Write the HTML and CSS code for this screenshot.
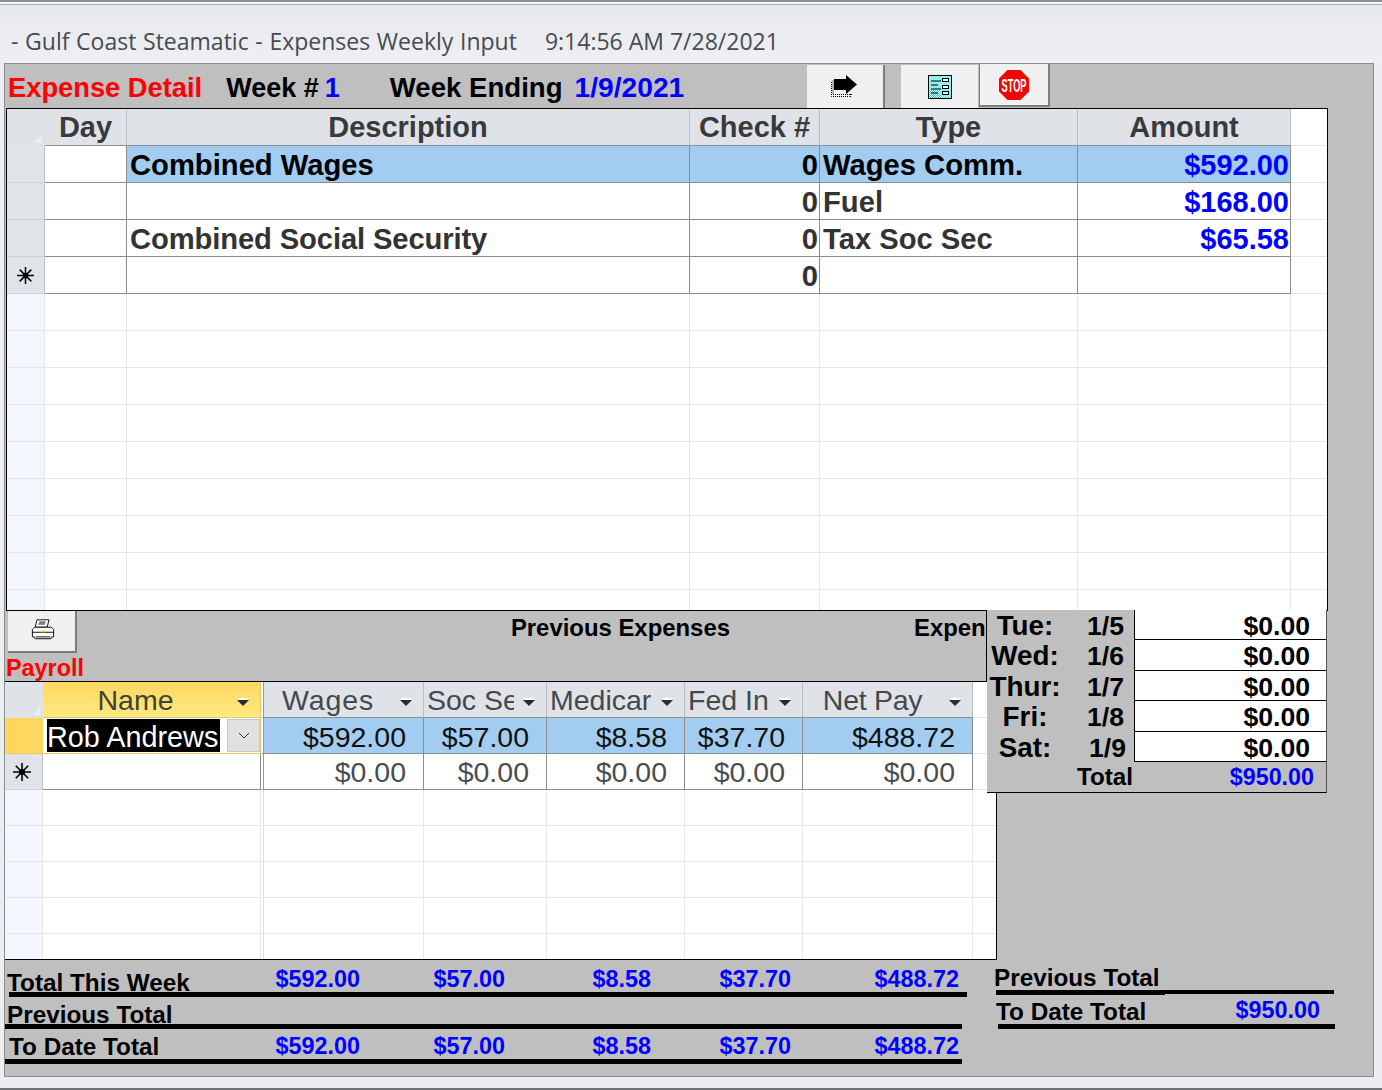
FILE: index.html
```html
<!DOCTYPE html>
<html lang="en">
<head>
<meta charset="utf-8">
<title>Expenses Weekly Input</title>
<link rel="stylesheet" href="styles.css">
</head>
<body>
<svg class="defs" width="0" height="0"><defs>
  <pattern id="dither" width="2" height="2" patternUnits="userSpaceOnUse"><rect width="2" height="2" fill="#fff"/><rect width="1" height="1" fill="#2fc4c4"/><rect x="1" y="1" width="1" height="1" fill="#2fc4c4"/></pattern>
  <symbol id="newrow" viewBox="0 0 18 18"><path d="M9 0v18M0 9h18M2.800 2.800l12.400 12.400M15.200 2.800 2.800 15.200" stroke="#000" stroke-width="1.600" fill="none"/><circle cx="9" cy="9" r="3" fill="#000"/></symbol>
</defs></svg>
<div class="app-top"></div>
<header class="titlebar"><span class="t-name">- Gulf Coast Steamatic - Expenses Weekly Input</span><span class="t-time">9:14:56 AM 7/28/2021</span></header>
<main class="form">
  <div class="form-head">
    <span class="h-expense">Expense Detail</span>
    <span class="h-week">Week #</span>
    <span class="h-weeknum">1</span>
    <span class="h-ending">Week Ending</span>
    <span class="h-date">1/9/2021</span>
    <button class="btn btn-next" type="button">
      <svg width="28" height="23" viewBox="0 0 28 23"><path d="M.5 7v14.500h18M19.500 19v3" fill="none" stroke="#000" stroke-dasharray="1 1"/><path d="M2 5.500v14h19" fill="none" stroke="#000" stroke-dasharray="1 1"/><path d="M3 4h12V0l11 9.500L15 19v-4H3z" fill="#000"/></svg>
    </button>
    <button class="btn btn-form" type="button">
      <svg width="24" height="24" viewBox="0 0 24 24"><rect x=".5" y=".5" width="23" height="23" fill="#8ff0ee" stroke="#000"/><path d="M1 23V14l9 2 4 7z" fill="url(#dither)"/><path d="M3 6h10M3 10h7M3 14h10M3 18h7" stroke="#000"/><g fill="#fff" stroke="#000"><rect x="14.500" y="3.500" width="6" height="3"/><rect x="14.500" y="10.500" width="6" height="3"/><rect x="14.500" y="16.500" width="6" height="3"/></g></svg>
    </button>
    <button class="btn btn-stop" type="button">
      <svg width="32" height="32" viewBox="0 0 32 32"><path d="M9.500 1h13L31 9.500v13L22.500 31h-13L1 22.500v-13z" fill="#f00600"/><text x="16" y="22.500" class="stop-text" textLength="25" lengthAdjust="spacingAndGlyphs">STOP</text></svg>
    </button>
  </div>

  <section class="sheet-a">
    <div class="ra ra-head">
      <div class="sel corner"></div><div class="hd">Day</div><div class="hd">Description</div><div class="hd">Check #</div><div class="hd">Type</div><div class="hd">Amount</div><div class="rest"></div>
    </div>
    <div class="ra ra-data">
      <div class="sel"></div><div class="c"></div><div class="c picked dark">Combined Wages</div><div class="c picked num dark">0</div><div class="c picked dark">Wages Comm.</div><div class="c picked num blue">$592.00</div><div class="rest"></div>
    </div>
    <div class="ra ra-data">
      <div class="sel"></div><div class="c"></div><div class="c"></div><div class="c num">0</div><div class="c">Fuel</div><div class="c num blue">$168.00</div><div class="rest"></div>
    </div>
    <div class="ra ra-data">
      <div class="sel"></div><div class="c"></div><div class="c c-tight">Combined Social Security</div><div class="c num">0</div><div class="c">Tax Soc Sec</div><div class="c num blue">$65.58</div><div class="rest"></div>
    </div>
    <div class="ra ra-data">
      <div class="sel"><svg class="star" width="17" height="17"><use href="#newrow"/></svg></div><div class="c"></div><div class="c"></div><div class="c num">0</div><div class="c"></div><div class="c"></div><div class="rest"></div>
    </div>
    <div class="ra ra-empty"><i></i><i></i><i></i><i></i><i></i><i></i><i></i></div>
    <div class="ra ra-empty"><i></i><i></i><i></i><i></i><i></i><i></i><i></i></div>
    <div class="ra ra-empty"><i></i><i></i><i></i><i></i><i></i><i></i><i></i></div>
    <div class="ra ra-empty"><i></i><i></i><i></i><i></i><i></i><i></i><i></i></div>
    <div class="ra ra-empty"><i></i><i></i><i></i><i></i><i></i><i></i><i></i></div>
    <div class="ra ra-empty"><i></i><i></i><i></i><i></i><i></i><i></i><i></i></div>
    <div class="ra ra-empty"><i></i><i></i><i></i><i></i><i></i><i></i><i></i></div>
    <div class="ra ra-empty"><i></i><i></i><i></i><i></i><i></i><i></i><i></i></div>
    <div class="ra ra-empty ra-last"><i></i><i></i><i></i><i></i><i></i><i></i><i></i></div>
  </section>

  <section class="band">
    <div class="band-top">
      <button class="btn btn-print" type="button">
        <svg width="24" height="23" viewBox="0 0 26 24"><path d="M6.500 1.500h13l-2 8h-13z" fill="#fff" stroke="#000"/><path d="M9 4h7M8 6h7" stroke="#000"/><path d="M1.500 12 4 9.500h18l2.500 2.500v8h-2l-1 2h-17l-1-2h-2z" fill="#fff" stroke="#000"/><path d="M1.500 15h23M5 20h16" stroke="#000"/><path d="M11 14h4" stroke="#e3e300" stroke-width="2"/></svg>
      </button>
      <span class="band-title">Previous Expenses</span>
      <span class="band-clip">Expen</span>
    </div>
    <div class="band-payroll">Payroll</div>
  </section>

  <section class="sheet-b">
    <div class="rb rb-head">
      <div class="sel corner"></div>
      <div class="hb hb-name"><span class="hb-t">Name</span><b class="arrow"></b></div>
      <div class="hb hb-wages"><span class="hb-t">Wages</span><b class="arrow"></b></div>
      <div class="hb hb-clip"><span class="hb-t clip">Soc Se</span><b class="arrow"></b></div>
      <div class="hb hb-clip"><span class="hb-t clip">Medicar</span><b class="arrow"></b></div>
      <div class="hb hb-clip"><span class="hb-t clip">Fed In</span><b class="arrow"></b></div>
      <div class="hb hb-net"><span class="hb-t">Net Pay</span><b class="arrow"></b></div>
      <div class="rest"></div>
    </div>
    <div class="rb rb-data">
      <div class="sel sel-active"></div>
      <div class="d d-name"><span class="selected-text">Rob Andrews</span><span class="combo"><svg width="12" height="7" viewBox="0 0 12 7"><path d="M1 1l5 5 5-5" fill="none" stroke="#333"/></svg></span></div>
      <div class="d d-picked d-wages">$592.00</div><div class="d d-picked">$57.00</div><div class="d d-picked">$8.58</div><div class="d d-picked">$37.70</div><div class="d d-picked">$488.72</div><div class="rest"></div>
    </div>
    <div class="rb rb-data">
      <div class="sel"><svg class="star star-b" width="18" height="18"><use href="#newrow"/></svg></div>
      <div class="d"></div>
      <div class="d dim d-wages">$0.00</div><div class="d dim">$0.00</div><div class="d dim">$0.00</div><div class="d dim">$0.00</div><div class="d dim">$0.00</div><div class="rest"></div>
    </div>
    <div class="rb rb-empty"><i></i><i></i><i></i><i></i><i></i><i></i><i></i><i></i></div>
    <div class="rb rb-empty"><i></i><i></i><i></i><i></i><i></i><i></i><i></i><i></i></div>
    <div class="rb rb-empty"><i></i><i></i><i></i><i></i><i></i><i></i><i></i><i></i></div>
    <div class="rb rb-empty"><i></i><i></i><i></i><i></i><i></i><i></i><i></i><i></i></div>
    <div class="rb rb-empty rb-last"><i></i><i></i><i></i><i></i><i></i><i></i><i></i><i></i></div>
  </section>

  <aside class="days">
    <div class="day"><span class="day-l">Tue:</span><span class="day-d">1/5</span><span class="day-v">$0.00</span></div>
    <div class="day day-tall"><span class="day-l">Wed:</span><span class="day-d">1/6</span><span class="day-v">$0.00</span></div>
    <div class="day"><span class="day-l">Thur:</span><span class="day-d">1/7</span><span class="day-v">$0.00</span></div>
    <div class="day day-tall"><span class="day-l">Fri:</span><span class="day-d">1/8</span><span class="day-v">$0.00</span></div>
    <div class="day"><span class="day-l">Sat:</span><span class="day-d day-sat">1/9</span><span class="day-v">$0.00</span></div>
    <div class="day-total"><span class="dt-l">Total</span><span class="dt-v">$950.00</span></div>
  </aside>

  <section class="totals">
    <div class="tot-left">
      <div class="tr tr-1"><span class="tl">Total This Week</span><span class="tv">$592.00</span><span class="tv">$57.00</span><span class="tv">$8.58</span><span class="tv">$37.70</span><span class="tv">$488.72</span></div>
      <div class="rule rule-1"></div>
      <div class="tr tr-2"><span class="tl">Previous Total</span></div>
      <div class="rule rule-2"></div>
      <div class="tr tr-3"><span class="tl tl-3">To Date Total</span><span class="tv">$592.00</span><span class="tv">$57.00</span><span class="tv">$8.58</span><span class="tv">$37.70</span><span class="tv">$488.72</span></div>
      <div class="rule rule-2"></div>
    </div>
    <div class="tot-right">
      <div class="tr-r1"><span class="tl">Previous Total</span></div>
      <div class="rule-r1"><span></span></div>
      <div class="tr-r2"><span class="tl">To Date Total</span><span class="tv">$950.00</span></div>
      <div class="rule rule-r2"></div>
    </div>
  </section>
</main>
<div class="app-bottom"></div>
</body>
</html>
```
FILE: styles.css
```css
* { box-sizing: border-box; }
html, body { margin: 0; padding: 0; }
body {
  width: 1382px;
  height: 1090px;
  overflow: hidden;
  background: #eceef2;
  font-family: "Liberation Sans", Arial, sans-serif;
  color: #000;
}
.defs { display: block; height: 0; }
.app-top {
  height: 5px;
  border-top: 2px solid #8b8f94;
  border-bottom: 1px solid #a6a9ad;
  background: #f6f7f8;
}
.titlebar {
  height: 58px;
  padding: 22px 0 0 11px;
  display: flex;
  font: 23px/28px "Open Sans", "Noto Sans", sans-serif;
  color: #474b50;
  background: linear-gradient(#e6e8ec, #eef0f3);
  white-space: nowrap;
}
.t-name { word-spacing: 0.7px; }
.t-time { margin-left: 28px; }

.form {
  position: relative;
  width: 1370px;
  height: 1014px;
  margin-left: 4px;
  background: #bfbfbf;
  border: 1px solid #8a8c8f;
}
.form-head {
  height: 44px;
  padding-right: 323px;
  display: flex;
  align-items: flex-start;
  white-space: nowrap;
  font-weight: 700;
  font-size: 27px;
  line-height: 48px;
}
.h-expense { margin-left: 3px; color: #f00; font-size: 27.300px; }
.h-week { margin-left: 24px; }
.h-weeknum { margin-left: 6px; color: #00f; }
.h-ending { margin-left: 50px; font-size: 27.600px; }
.h-date { margin-left: 12px; color: #00f; font-size: 28.200px; line-height: 46px; }

.btn {
  padding: 0;
  display: flex;
  align-items: center;
  justify-content: center;
  background: #f0f0f0;
  border: 0;
  border-right: 2px solid #7d7d7d;
  border-bottom: 2px solid #7d7d7d;
}
.btn-next { width: 78px; height: 43px; margin: 1px 0 0 auto; border-bottom: 0; }
.btn-form { width: 77px; height: 43px; margin: 1px 0 0 16px; border-right: 0; border-bottom: 0; }
.btn-stop { width: 71px; height: 43px; margin-left: 1px; border-left: 1px solid #7d7d7d; }
.stop-text { font: 700 18px "Liberation Sans", sans-serif; fill: #fff; text-anchor: middle; }
.btn-print { width: 69px; height: 42px; margin-left: 3px; }
.btn-print svg { margin: -4px 0 0 3px; }

.sheet-a {
  width: 1322px;
  height: 503px;
  margin-left: 1px;
  border: 1px solid #000;
  background: #fff;
  overflow: hidden;
}
.ra {
  display: grid;
  grid-template-columns: 38px 82px 563px 130px 258px 213px 1fr;
  grid-template-rows: 100%;
  height: 37px;
}
.ra-last { height: 21px; }
.sel {
  background: #e0e4e9;
  border-bottom: 1px solid #cfd3d8;
  border-right: 1px solid #bfc3c8;
  display: flex;
  align-items: center;
  justify-content: center;
}
.corner { position: relative; background: #dfe3e8; border-right: 0; border-bottom: 0; }
.corner::after {
  content: "";
  position: absolute;
  right: 3px;
  bottom: 3px;
  border-left: 8px solid transparent;
  border-bottom: 8px solid #eef0f3;
}
.star { display: block; }
.star-b { margin-right: 3px; }
.hd {
  background: #dfe3e8;
  border-right: 1px solid #b9bcc1;
  border-bottom: 1px solid #8c8f93;
  font: 700 29px/36px "Liberation Sans", sans-serif;
  color: #3a3a3d;
  text-align: center;
}
.ra-head .rest { background: #fff; border-bottom: 1px solid #e6e6e6; }
.rest { border-bottom: 1px solid #e4e4e4; }
.c {
  background: #fff;
  border-right: 1px solid #8c8c8c;
  border-bottom: 1px solid #8c8c8c;
  padding: 0 1px 0 3px;
  font: 700 29.200px/38px "Liberation Sans", sans-serif;
  color: #333;
  white-space: nowrap;
  overflow: hidden;
}
.c-tight { letter-spacing: -0.12px; }
.picked { background: #a3cdf0; }
.dark { color: #000; }
.num { text-align: right; }
.blue { color: #00f; font-size: 29px; }
.ra-empty i { display: block; border-right: 1px solid #e6e6e6; border-bottom: 1px solid #e6e6e6; }
.ra-empty i:first-child { background: #f4f6fd; }
.ra-empty i:last-child { border-right: 0; }
.ra-last i { border-bottom: 0; }

.band {
  width: 982px;
  height: 71px;
  border-right: 1px solid #000;
  border-bottom: 1px solid #000;
  overflow: hidden;
}
.band-top { height: 42px; display: flex; font: 700 23.900px/34px "Liberation Sans", sans-serif; white-space: nowrap; }
.band-title { margin-left: 434px; }
.band-clip { width: 72px; margin-left: 184px; flex: none; }
.band-payroll { margin: 0 0 0 1px; color: #f00; font: 700 23.400px/30px "Liberation Sans", sans-serif; }

.sheet-b {
  width: 992px;
  height: 278px;
  background: #fff;
  border-right: 1px solid #000;
  border-bottom: 1px solid #000;
  overflow: hidden;
}
.rb {
  display: grid;
  grid-template-columns: 38px 218px 163px 123px 138px 118px 170px 1fr;
  grid-template-rows: 100%;
  height: 36px;
}
.rb-last { height: 25px; }
.hb {
  position: relative;
  background: #dfe3e8;
  border-right: 1px solid #b9bcc1;
  border-bottom: 1px solid #8c8f93;
  font: 28.500px/36px "Liberation Sans", sans-serif;
  color: #45484c;
  text-align: center;
  padding-right: 30px;
  white-space: nowrap;
}
.hb-name {
  background: linear-gradient(#ffd75f, #ffe980);
  border-right: 1px solid #e8c968;
  border-bottom: 1px solid #e8c968;
  color: #3f4238;
  padding-right: 32px;
}
.hb-clip { padding-right: 32px; }
.hb-t.clip {
  display: block;
  overflow: hidden;
  text-align: left;
  padding-left: 3px;
}
.hb-wages { border-left: 2px solid #fff; box-shadow: inset 1px 0 0 #9a9a9a; letter-spacing: 0.9px; }
.hb-net { letter-spacing: -0.3px; }
.arrow {
  position: absolute;
  right: 11px;
  top: 18px;
  width: 0;
  height: 0;
  border-left: 6px solid transparent;
  border-right: 6px solid transparent;
  border-top: 6px solid #2b2b2b;
  filter: drop-shadow(0 -2px 0 #fff);
}
.sel-active { background: #ffd75f; border-color: #e8c968; border-right: 0; }
.d {
  background: #fff;
  border-right: 1px solid #8c8c8c;
  border-bottom: 1px solid #8c8c8c;
  padding-right: 17px;
  font: 28.500px/36px "Liberation Sans", sans-serif;
  color: #111;
  text-align: right;
  white-space: nowrap;
  overflow: hidden;
}
.d-picked { background: #a3cdf0; line-height: 38px; }
.dim { color: #4a4d50; }
.d-wages { border-left: 2px solid #fff; box-shadow: inset 1px 0 0 #9a9a9a; }
.d-name {
  display: flex;
  justify-content: flex-start;
  align-items: flex-start;
  padding: 1px 0 0 4px;
  border-right: 1px solid #e8c968;
  border-bottom: 1px solid #e8c968;
  line-height: 37px;
}
.selected-text { background: #000; color: #fff; height: 33px; width: 173px; font-size: 28.800px; text-align: left; flex: none; overflow: hidden; }
.combo {
  width: 33px;
  height: 33px;
  margin-left: 7px;
  background: #e0e0e0;
  border: 1px solid #c9c9c9;
  display: flex;
  align-items: center;
  justify-content: center;
  flex: none;
}
.rb-empty i { display: block; border-right: 1px solid #e6e6e6; border-bottom: 1px solid #e6e6e6; }
.rb-empty i:first-child { background: #f4f6fd; }
.rb-empty i:nth-child(3) { border-left: 2px solid #fff; box-shadow: inset 1px 0 0 #dcdcdc; }
.rb-empty i:last-child { border-right: 0; }
.rb-last i { border-bottom: 0; }

.days {
  position: absolute;
  left: 982px;
  top: 546px;
  width: 340px;
  background: #bfbfbf;
  border-right: 1px solid #555;
  border-bottom: 1px solid #000;
  font: 700 26.600px/1 "Liberation Sans", sans-serif;
}
.day { display: grid; grid-template-columns: 76px 71px 1fr; grid-template-rows: 100%; height: 30px; line-height: 32px; }
.day-tall { height: 31px; }
.day-l { text-align: center; font-size: 27.800px; white-space: nowrap; }
.day-d { padding-left: 24px; }
.day-sat { padding-left: 26px; }
.day-v { background: #fff; border-left: 1px solid #000; border-bottom: 1px solid #000; text-align: right; padding-right: 16px; overflow: hidden; }
.day-total { height: 30px; display: grid; grid-template-columns: 147px 1fr; line-height: 30px; }
.dt-l { text-align: right; padding-right: 1px; font-size: 24.200px; }
.dt-v { color: #00f; text-align: right; padding-right: 12px; font-size: 23.300px; }

.totals { display: flex; font: 700 24.300px/26px "Liberation Sans", sans-serif; white-space: nowrap; }
.tot-left { width: 990px; flex: none; }
.tr { display: grid; grid-template-columns: 355px 145px 146px 140px 168px; }
.tl { grid-column: 1; grid-row: 1; padding-left: 2px; }
.tv { color: #00f; font-size: 23.400px; text-align: right; }
.tr-1 { height: 32px; }
.tr-1 .tl { padding-top: 10px; }
.tr-1 .tv { padding-top: 6px; }
.tv:nth-child(2) { grid-column: 1; grid-row: 1; }
.tr-2 { height: 27px; padding-top: 5px; }
.tr-3 { height: 30px; }
.tr-3 .tl-3 { padding: 5px 0 0 4px; }
.tr-3 .tv { padding-top: 4px; }
.rule { height: 5px; background: #000; }
.rule-1 { width: 958px; margin-left: 4px; }
.rule-2 { width: 957px; }
.tot-right { width: 345px; flex: none; margin-left: -1px; }
.tr-r1 { height: 30px; padding-top: 5px; }
.tr-r1 .tl { padding-left: 0; }
.rule-r1 { width: 338px; height: 5px; margin-left: 2px; display: flex; background: linear-gradient(#000 80%, transparent 80%); }
.rule-r1 span { display: block; width: 169px; height: 5px; background: #000; }
.tr-r2 { height: 29px; padding-top: 4px; display: flex; justify-content: space-between; width: 326px; }
.tr-r2 .tl { padding: 0 0 0 2px; }
.tr-r2 .tv { line-height: 22px; }
.rule-r2 { width: 337px; margin-left: 4px; }

.app-bottom { height: 13px; border-bottom: 2px solid #6f7276; background: #eceef2; }
```
